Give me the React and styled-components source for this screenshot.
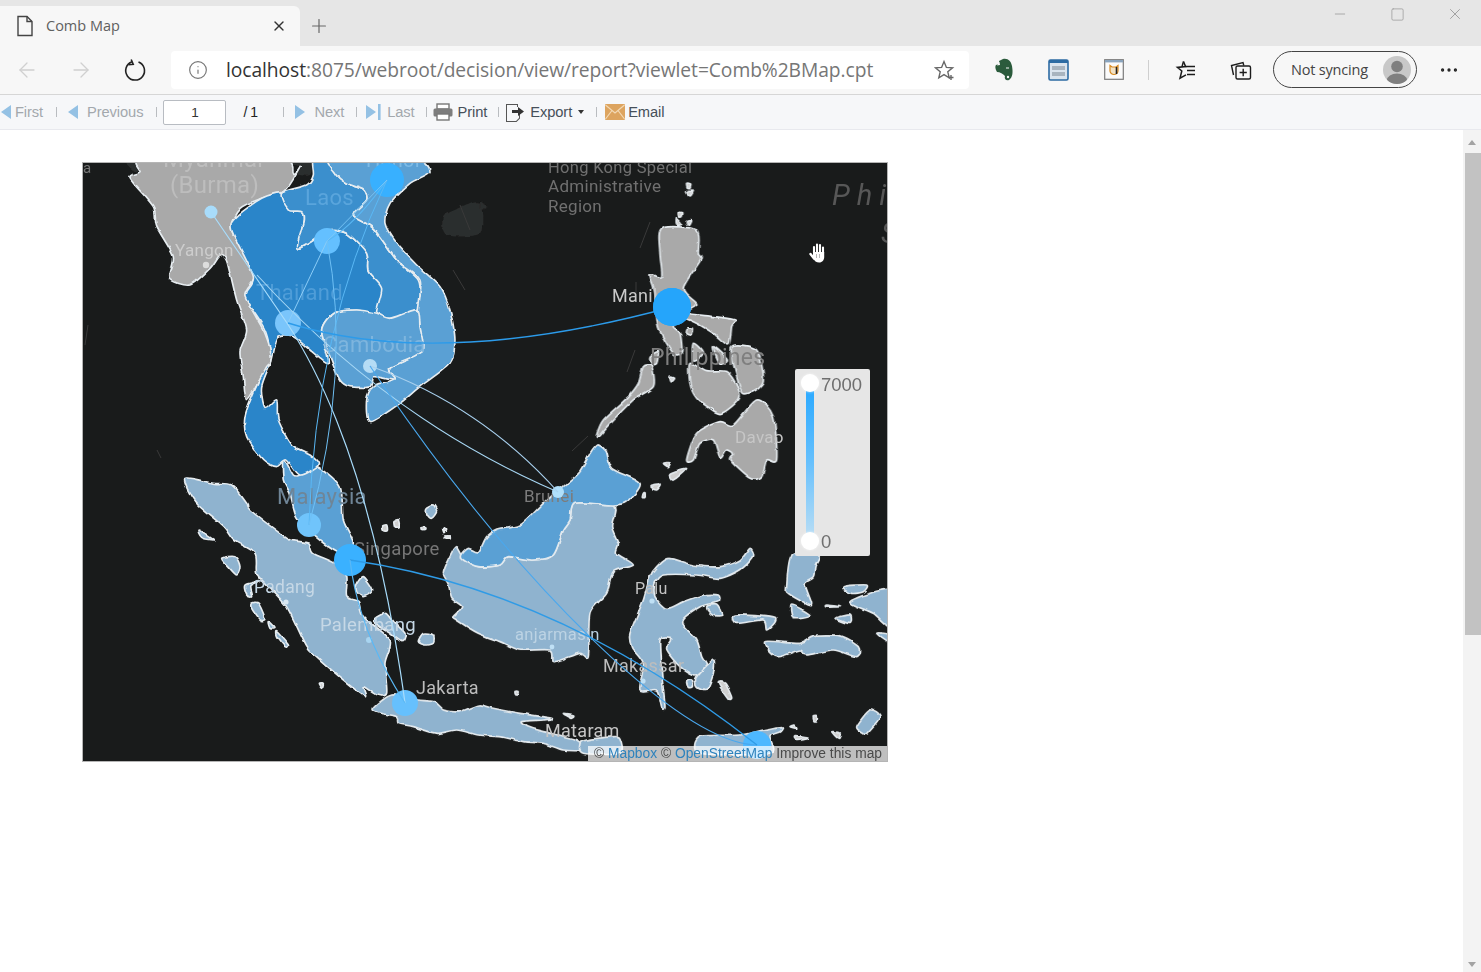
import React from "react";
import styled, { createGlobalStyle } from "styled-components";
import { ArrowLeft, ArrowRight, Info, MoreHorizontal, Minus, Plus, Square, X } from "lucide-react";

const GlobalStyle = createGlobalStyle`
  html, body { margin: 0; padding: 0; height: 100%; overflow: hidden; background: #fff; }
  body { font-family: "Liberation Sans", Arial, sans-serif; }
`;

const GRAY = "#a9a9a9";
const DEEP = "#2a85c9";
const MID = "#3b8fcd";
const SOFT = "#5aa0d4";
const PALE = "#8fb3cf";
const SPECK = "#cfcfcf";

// land shapes, written in the coordinates of four map quadrants (drawn at 3x)
const QUADRANTS = [
  {
    x: 80,
    y: 160,
    land: [
      [GRAY, "150,55 180,35 195,-5 600,-5 640,40 660,20 610,95 545,115 480,145 455,210 525,340 495,405 555,520 575,600 540,660 500,720 490,650 480,575 500,510 470,420 440,300 420,285 390,325 330,375 270,355 280,290 230,200 220,140"],
      [SOFT, "610,895 640,945 660,945 710,920 780,980 790,1080 820,1150 780,1180 700,1125 650,1070 630,1000 610,960"],
      [DEEP, "470,170 545,115 605,100 625,150 665,155 670,185 655,265 700,240 745,215 800,220 860,280 865,335 910,385 900,460 830,450 760,460 725,510 745,610 690,570 640,530 595,530 575,600 545,680 555,745 590,720 595,780 640,860 690,885 715,915 660,945 620,900 590,920 550,900 500,830 495,770 520,700 560,620 575,600 555,510 495,410 520,350 455,210"],
      [MID, "700,-5 755,-5 765,40 800,70 850,90 860,120 820,165 880,205 950,300 1015,360 1020,430 1010,450 930,475 890,460 905,385 865,335 860,280 800,220 745,215 655,265 670,185 665,155 625,150 605,100 680,75 700,45"],
      [SOFT, "755,-5 1000,-5 1050,35 990,70 930,130 915,190 950,250 1010,315 1080,380 1110,450 1125,540 1110,610 1020,680 960,730 870,785 860,720 880,680 945,660 930,625 1020,575 1020,500 1015,450 1020,360 950,300 880,205 820,165 860,120 850,90 800,70 765,40"],
      [SOFT, "760,460 830,450 890,460 930,475 1010,450 1020,500 1025,575 930,625 945,660 880,650 870,680 810,680 780,660 750,590 725,510"],
    ],
    dark: ["1090,170 1150,140 1200,130 1200,220 1100,225", "600,-5 690,-5 690,45 640,40 660,20", "140,10 190,5 170,35"],
  },
  {
    x: 480,
    y: 160,
    land: [
      [GRAY, "545,205 650,210 655,280 662,300 610,385 650,430 635,445 620,460 700,470 765,480 755,500 745,555 700,520 640,485 600,475 580,500 600,520 605,575 580,580 535,500 525,400 510,345 545,350 540,280"],
      [GRAY, "755,560 830,570 850,660 825,690 790,700 770,650"],
      [GRAY, "630,610 680,635 745,640 780,710 725,760 690,745 650,715 630,670"],
      [GRAY, "620,900 650,820 720,785 760,795 830,720 880,770 890,900 860,900 845,950 810,955 750,900 760,880 740,870 720,895 700,840 660,850 640,900"],
      [GRAY, "350,825 370,780 440,715 475,670 490,620 515,620 520,680 460,720 390,790 355,830"],
      [GRAY, "622,505 640,505 635,525 620,520"],
      [GRAY, "510,590 535,575 530,610 515,612"],
      [GRAY, "640,550 670,580 640,600"],
      [GRAY, "700,560 745,600 720,610"],
      [SPECK, "620,70 632,72 630,85 622,85"],
      [SPECK, "620,95 637,90 628,105"],
      [SPECK, "595,158 608,158 606,170 597,170"],
      [SPECK, "590,175 605,190 590,192"],
      [SPECK, "622,185 635,182 628,196"],
      [SPECK, "570,652 584,655 574,666"],
    ],
    dark: ["0,125 18,140 0,155"],
  },
  {
    x: 80,
    y: 460,
    land: [
      [PALE, "315,55 400,70 455,75 500,130 510,150 600,220 630,240 685,250 700,280 765,310 800,350 800,410 835,425 850,470 930,540 915,610 920,700 890,705 850,680 855,710 790,660 710,590 680,560 620,440 560,375 530,340 525,280 460,240 430,200 345,125"],
      [PALE, "355,210 395,235 400,240 365,232"],
      [PALE, "425,295 465,290 480,320 470,345 445,320"],
      [PALE, "515,430 535,430 555,475 540,480 515,445"],
      [PALE, "565,485 585,505 570,505"],
      [PALE, "590,515 625,555 615,560 590,530"],
      [PALE, "495,375 540,365 510,380 515,410 500,405"],
      [PALE, "885,475 920,460 945,490 975,520 965,545 930,520 890,495"],
      [PALE, "1015,545 1030,520 1060,525 1060,550 1035,555"],
      [PALE, "830,375 850,350 878,390 850,410 830,395"],
      [PALE, "1040,145 1060,135 1070,155 1055,175 1042,165"],
      [SPECK, "715,670 730,670 725,685"],
      [SPECK, "905,198 920,195 922,212 910,212"],
      [SPECK, "942,182 955,180 958,200 945,200"],
      [SPECK, "1027,200 1037,200 1037,208 1027,208"],
      [SPECK, "1088,205 1097,210 1092,218"],
      [SPECK, "1097,228 1110,228 1110,234 1097,234"],
    ],
    dark: [],
  },
  {
    x: 480,
    y: 460,
    land: [
      [PALE, "-110,340 -90,290 -70,260 -50,290 -5,320 60,315 85,290 160,300 220,285 250,210 270,180 285,130 400,135 395,200 415,250 410,280 460,315 400,335 380,400 330,460 325,590 300,580 220,605 210,570 120,570 60,545 -5,520 -70,480 -80,470 -55,440 -85,415 -95,370"],
      [SOFT, "-55,285 -35,265 -5,275 20,230 50,210 120,195 180,140 215,105 250,80 300,35 330,-20 350,-45 375,-30 395,25 480,70 440,125 400,135 285,130 270,180 250,210 220,285 160,300 85,290 60,315 -5,320 -50,300"],
      [PALE, "450,520 490,420 510,350 530,320 565,295 640,315 720,320 780,300 810,265 820,290 780,330 720,355 650,345 550,345 525,370 525,410 560,445 610,425 670,405 715,405 715,425 660,440 605,485 650,540 665,590 680,620 645,645 600,620 560,570 575,535 540,540 545,640 555,740 545,740 530,690 480,690 490,610 455,560"],
      [PALE, "650,650 700,600 700,640 680,690 650,680"],
      [PALE, "620,665 635,660 640,680 625,682"],
      [SPECK, "715,670 735,670 755,712 745,715"],
      [PALE, "680,440 710,435 725,465 700,465"],
      [PALE, "935,285 1015,285 1005,320 1000,350 975,370 995,430 985,435 925,400 920,380"],
      [PALE, "935,435 990,465 940,472"],
      [PALE, "1090,380 1160,375 1150,395 1115,400"],
      [SPECK, "1040,435 1085,440 1040,441"],
      [PALE, "1110,425 1232,390 1232,500 1180,460"],
      [PALE, "765,465 885,475 860,510 850,480 770,490"],
      [PALE, "1065,475 1110,465 1110,490"],
      [PALE, "1190,520 1232,525 1232,550"],
      [PALE, "855,545 960,550 1000,530 1080,530 1135,560 1130,590 1060,570 980,585 960,570 890,590"],
      [PALE, "1130,800 1170,750 1200,770 1160,820 1150,820"],
      [PALE, "-320,745 -265,705 -190,720 -140,725 -110,750 -60,755 -5,735 40,745 120,760 215,775 190,780 125,785 140,800 190,815 290,840 310,870 250,870 190,850 130,845 60,830 -5,825 -70,810 -130,820 -200,800 -245,790 -250,770 -300,760"],
      [PALE, "300,850 320,840 400,830 420,835 420,880 310,880"],
      [PALE, "660,830 780,825 850,810 905,800 900,815 870,830 870,880 660,880"],
      [SPECK, "250,760 278,765 270,772"],
      [SPECK, "102,694 114,694 112,704 104,704"],
      [SPECK, "1000,770 1012,770 1010,782 1002,782"],
      [SPECK, "1055,815 1080,820 1075,835"],
      [SPECK, "945,830 985,835 950,841"],
      [SPECK, "930,800 945,795 950,805"],
      [SPECK, "490,100 495,98 495,112 487,112"],
      [SPECK, "510,80 540,75 530,90"],
      [SPECK, "570,40 620,25 580,60"],
      [SPECK, "550,10 570,8 565,20"],
    ],
    dark: [],
  },
];

const ROUTES = [
  ["M211 212 L287 323 Q370 450 405 703", "#a8dcfb", 1.2],
  ["M257 275 Q390 420 558 492", "#a8d8f5", 1.1],
  ["M370 366 Q480 405 558 492", "#a8d0ee", 1.1],
  ["M370 366 Q480 530 590 637 T757 745", "#4aa8ee", 1.1],
  ["M350 560 Q560 590 757 745", "#2f9be6", 1.3],
  ["M350 560 Q358 630 405 703", "#5ab8f5", 1.2],
  ["M387 180 Q315 330 309 525", "#5ab8f5", 1],
  ["M387 180 Q355 225 327 241", "#5ab8f5", 1.2],
  ["M387 180 L327 241", "#7cc7f7", 0.9],
  ["M327 241 L288 323", "#8ccdf7", 1],
  ["M327 241 Q352 370 309 525", "#6fc0f5", 1],
  ["M288 323 Q440 370 672 307", "#2c9bea", 1.4],
];

const BUBBLES = [
  [211, 212, 6.5, "#a8dcfb"],
  [370, 366, 7, "#b5dcf5"],
  [558, 492, 6, "#b0e0fb"],
  [369, 640, 3, "#a8d4f0"],
  [288, 323, 13, "#7ac5fb"],
  [327, 241, 13, "#64c0ff"],
  [387, 180, 17, "#38b0ff"],
  [309, 525, 12, "#70c4fb"],
  [350, 560, 16, "#3ab1ff"],
  [405, 703, 13, "#66c0fd"],
  [757, 745, 14, "#4db8ff"],
  [672, 307, 19, "#25a5fb"],
];

const CITY_DOTS = [
  [206, 265, 3.2, "#dddddd"],
  [652, 601, 2.6, "#bfe0f5"],
  [552, 647, 2.4, "#bfe0f5"],
  [643, 681, 2.6, "#bfe0f5"],
  [286, 602, 2.6, "#d8e6f0"],
];

const LABELS = [
  ["Myanmar", 163, 167, 24, "#bdbdbd"],
  ["(Burma)", 170, 193, 24, "#bdbdbd"],
  ["Hanoi", 366, 167, 20, "#7dbbe6"],
  ["Laos", 305, 205, 22, "#5aa5dc"],
  ["Thailand", 256, 300, 22, "#4f9dd8"],
  ["Cambodia", 323, 352, 22, "#7eb5de"],
  ["Yangon", 175, 256, 17, "#cdcdcd"],
  ["Hong Kong Special", 548, 173, 16.5, "#707070"],
  ["Administrative", 548, 192, 17, "#707070"],
  ["Region", 548, 212, 17, "#707070"],
  ["Manila", 612, 302, 18, "#c9c9c9"],
  ["Philippines", 650, 365, 23, "#7f7f7f"],
  ["Davao", 735, 443, 17, "#c6c6c6"],
  ["Brunei", 524, 502, 17, "#7c7c7c"],
  ["Malaysia", 277, 504, 22, "#6f8597"],
  ["Singapore", 354, 555, 18.5, "#767676"],
  ["Padang", 254, 593, 17.5, "#c6d8e6"],
  ["Palembang", 320, 631, 18.5, "#c6d8e6"],
  ["Jakarta", 416, 694, 18, "#bdbdbd"],
  ["Palu", 635, 594, 16, "#c2c2c2"],
  ["anjarmasin", 515, 640, 16.5, "#bcd3e4"],
  ["Makassar", 603, 672, 18, "#bdbdbd"],
  ["Mataram", 545, 737, 18, "#c6c6c6"],
  ["a", 83, 173, 15, "#777777"],
];

// closed curve through the listed points, so coasts don't look like cut paper
const coast = (points) => {
  const p = points.split(" ").map((pair) => pair.split(",").map(Number));
  const at = (i) => p[(i + p.length) % p.length];
  const k = 0.13;
  let d = `M${p[0][0]} ${p[0][1]}`;
  p.forEach((cur, i) => {
    const prev = at(i - 1);
    const next = at(i + 1);
    const after = at(i + 2);
    d += `C${cur[0] + (next[0] - prev[0]) * k} ${cur[1] + (next[1] - prev[1]) * k} ${next[0] - (after[0] - cur[0]) * k} ${next[1] - (after[1] - cur[1]) * k} ${next[0]} ${next[1]}`;
  });
  return `${d}Z`;
};

const BrowserIcon = styled.svg`
  display: block;
  fill: none;
  stroke: ${(p) => p.$stroke || "#333"};
  stroke-width: ${(p) => p.$weight || 1.4};
`;

const Page = styled.div`
  width: 1481px;
  height: 972px;
  display: flex;
  flex-direction: column;
  overflow: hidden;
  color: #333;
`;

const TabStrip = styled.div`
  height: 46px;
  flex: none;
  box-sizing: border-box;
  padding-top: 6px;
  background: #e6e6e6;
  display: flex;
  align-items: stretch;
`;

const Tab = styled.div`
  width: 300px;
  box-sizing: border-box;
  padding: 0 13px 0 15px;
  background: #f7f7f7;
  border-radius: 0 6px 0 0;
  display: flex;
  align-items: center;
  gap: 11px;
`;

const TabTitle = styled.span`
  flex: 1;
  margin-top: -2px;
  font: 14.5px "Open Sans", sans-serif;
  color: #606060;
`;

const NewTab = styled.div`
  width: 38px;
  display: flex;
  align-items: center;
  justify-content: center;
  color: #666;
`;

const WindowControls = styled.div`
  margin: -6px -3px 0 auto;
  height: 28px;
  display: flex;
  align-items: center;
  color: #9a9a9a;
`;

const WindowButton = styled.div`
  width: 57.5px;
  display: flex;
  justify-content: center;
`;

const NavBar = styled.div`
  height: 49px;
  flex: none;
  box-sizing: border-box;
  background: #f7f7f7;
  border-bottom: 1px solid #d6d6d6;
  display: flex;
  align-items: center;
  padding-bottom: 1px;
`;

const ToolButton = styled.div`
  width: ${(p) => p.$width || 55}px;
  height: 36px;
  flex: none;
  display: flex;
  align-items: center;
  justify-content: center;
  color: ${(p) => p.$color || "#222"};
`;

const AddressBox = styled.div`
  width: 798px;
  height: 38px;
  margin: 0 7px 0 9px;
  flex: none;
  box-sizing: border-box;
  padding: 0 13px 0 17px;
  background: #fff;
  border-radius: 4px;
  display: flex;
  align-items: center;
  color: #777;
`;

const Url = styled.div`
  flex: 1;
  margin-left: 18px;
  font: 19.25px "Open Sans", sans-serif;
  letter-spacing: -0.07px;
  color: #767676;
  white-space: nowrap;
`;

const UrlHost = styled.span`
  color: #333;
`;

const NavDivider = styled.div`
  width: 1px;
  height: 20px;
  margin: 0 9px 0 7px;
  background: #cfcfcf;
`;

const SyncPill = styled.div`
  width: 144px;
  height: 37px;
  margin: 0 4px 0 5px;
  box-sizing: border-box;
  padding: 0 5px 0 17px;
  border: 1.5px solid #444;
  border-radius: 19px;
  display: flex;
  align-items: center;
  justify-content: space-between;
  font: 14.5px "Open Sans", sans-serif;
  letter-spacing: -0.2px;
  color: #444;
`;

const Avatar = styled.div`
  width: 28px;
  height: 28px;
  border-radius: 50%;
  background: #c8c8c8;
  overflow: hidden;
`;

const ReportBar = styled.div`
  height: 35px;
  flex: none;
  box-sizing: border-box;
  padding-left: 1px;
  background: #f6f7f9;
  border-bottom: 1px solid #e8e9ee;
  display: flex;
  align-items: center;
`;

const ReportItem = styled.div`
  display: flex;
  align-items: center;
  gap: ${(p) => p.$gap || 4}px;
  font-size: 14.7px;
  letter-spacing: -0.1px;
  color: ${(p) => (p.$off ? "#a3a8ad" : "#46505a")};
`;

const Separator = styled.div`
  width: 1px;
  height: 10px;
  margin: 0 ${(p) => p.$right || 11}px 0 ${(p) => p.$left || 11}px;
  background: #b9bcc0;
`;

const PageInput = styled.div`
  width: 63px;
  height: 25px;
  box-sizing: border-box;
  border: 1px solid #b8bcc2;
  border-radius: 2px;
  background: #fff;
  display: flex;
  align-items: center;
  justify-content: center;
  font-size: 13.5px;
  color: #333;
`;

const PageTotal = styled.span`
  width: 29px;
  margin-left: 17px;
  font-size: 14px;
  letter-spacing: 3px;
  color: #222;
`;

const Caret = styled.span`
  width: 0;
  height: 0;
  margin-left: 1px;
  border: 3.5px solid transparent;
  border-top: 4px solid #333;
  border-bottom: 0;
`;

const Body = styled.div`
  flex: 1;
  display: flex;
  min-height: 0;
`;

const Content = styled.main`
  flex: 1;
  padding: 32px 0 0 82px;
  background: #fff;
`;

const MapFrame = styled.div`
  position: relative;
  width: 806px;
  height: 600px;
  box-sizing: border-box;
  border: 1px solid #b5b5b5;
  background: #191b1b;
  overflow: hidden;
`;

const MapCanvas = styled.svg`
  position: absolute;
  left: -1px;
  top: -1px;
  display: block;
`;

const MapLabel = styled.text`
  font-family: Roboto, "Liberation Sans", sans-serif;
  letter-spacing: 0.3px;
`;

const SeaLabel = styled.text`
  font: italic 29px Roboto, "Liberation Sans", sans-serif;
  letter-spacing: 7px;
  fill: #575757;
`;

const Legend = styled.div`
  position: absolute;
  left: 712px;
  top: 206px;
  width: 75px;
  height: 187px;
  box-sizing: border-box;
  background: #e6e6e6;
  border-radius: 2px;
  font-size: 18.5px;
  color: #6f6f6f;
`;

const LegendTrack = styled.div`
  position: absolute;
  left: 11px;
  top: 20px;
  width: 8px;
  height: 145px;
  background: linear-gradient(#2aa9ff, #66c0fd 50%, #b5dcf5);
`;

const LegendHandle = styled.div`
  position: absolute;
  left: 6px;
  top: ${(p) => p.$top}px;
  width: 18px;
  height: 18px;
  border-radius: 50%;
  background: #fff;
  box-shadow: 0 0 3px rgba(255, 255, 255, 0.7);
`;

const LegendValue = styled.span`
  position: absolute;
  left: 26px;
  top: ${(p) => p.$top}px;
  line-height: 20px;
`;

const Attribution = styled.div`
  position: absolute;
  right: -1px;
  bottom: 0;
  width: 300px;
  height: 15px;
  box-sizing: border-box;
  padding-left: 6px;
  background: rgba(255, 255, 255, 0.72);
  font-size: 13.8px;
  line-height: 15px;
  color: #4a4a4a;
  white-space: nowrap;
`;

const MapLink = styled.span`
  color: #2f83bd;
`;

const HandCursor = styled.svg`
  position: absolute;
  left: 726px;
  top: 79px;
  display: block;
`;

const ScrollBar = styled.div`
  width: 18px;
  flex: none;
  display: flex;
  flex-direction: column;
  align-items: flex-end;
  background: #f3f3f3;
`;

const ScrollArrow = styled.div`
  width: 0;
  height: 0;
  margin: ${(p) => (p.$down ? "auto 5px 5px" : "10px 5px 8px")};
  border: 4px solid transparent;
  ${(p) => (p.$down ? "border-top: 5px solid #a3a3a3; border-bottom: 0;" : "border-bottom: 5px solid #a3a3a3; border-top: 0;")}
`;

const ScrollThumb = styled.div`
  width: 16px;
  height: 482px;
  background: #c2c2c2;
`;

const ReloadIcon = () => (
  <BrowserIcon width="24" height="24" viewBox="0 0 24 24" $stroke="#222" $weight="1.6">
    <path d="M9 3.8a9.4 9.4 0 1 0 6.5.1" />
    <path d="M8.2 1.5 10.2 6.3 5.4 6.6" />
  </BrowserIcon>
);

const StarPlusIcon = () => (
  <BrowserIcon width="22" height="22" viewBox="0 0 22 22" $stroke="#666">
    <path d="M10 2.5 12.4 8.4 18.6 8.8 13.8 12.8 15.2 18.8 10 15.6 4.8 18.8 6.2 12.8 1.4 8.8 7.6 8.4Z" />
    <path d="M17 16v5M14.5 18.5h5" />
  </BrowserIcon>
);

const EvernoteIcon = () => (
  <svg width="20" height="24" viewBox="0 0 20 24">
    <path fill="#2b5b3c" d="M5 3 9 1c5-1 8 2 9 7 1 6 1 11-3 14-3 1-5-1-4-4-2-2-5-4-8-4-2-3-2-6-1-7l3-1Z" />
    <path fill="#f7f7f7" d="M5.5 3.5 6 7l-3 .6Z" />
    <path d="M12 10h3" stroke="#f7f7f7" strokeWidth="1" />
    <circle cx="14" cy="19" r="1.2" fill="#f7f7f7" />
  </svg>
);

const ReaderIcon = () => (
  <svg width="21" height="22" viewBox="0 0 21 22">
    <rect x="1" y="1" width="19" height="20" rx="1.5" fill="#dbe4ee" stroke="#2d6ba3" strokeWidth="1.6" />
    <rect x="1" y="1" width="19" height="3" fill="#2d6ba3" />
    <rect x="4" y="7" width="13" height="4" fill="#a9b4bf" />
    <rect x="4" y="13" width="13" height="4" fill="#a9b4bf" />
  </svg>
);

const CatIcon = () => (
  <svg width="20" height="21" viewBox="0 0 20 21">
    <rect x="0.7" y="0.7" width="18.6" height="19.6" fill="#fbfbfb" stroke="#7b7b7b" strokeWidth="1.2" />
    <rect x="1" y="1" width="18" height="2.4" fill="#8aa4bd" />
    <path d="M6 6.5 8 8h4l2-1.5V12c0 2-2 3.5-4 3.5S6 14 6 12Z" fill="#f2e2c4" stroke="#d98a1f" strokeWidth="1.2" />
    <path d="M12.5 8v7" stroke="#222" strokeWidth="1.6" />
  </svg>
);

const FavoritesIcon = () => (
  <BrowserIcon width="22" height="22" viewBox="0 0 22 22" $stroke="#1c1c1c" $weight="1.5">
    <path d="M8.5 2.5 10.6 7.6 2.4 8.4 6.8 12 5 19.2 11 15.8" />
    <path d="M8.5 2.5 7 7.6M10.6 7.6h9.4M12 11.5h8M12 15.5h8" />
  </BrowserIcon>
);

const CollectionsIcon = () => (
  <BrowserIcon width="22" height="22" viewBox="0 0 22 22" $stroke="#1c1c1c" $weight="1.4">
    <path d="M3.5 16 1.5 6.5 13 3.5l.8 3" />
    <rect x="6" y="7" width="14.5" height="13" rx="1.5" />
    <path d="M13.2 9.8v7.4M9.6 13.5h7.2" />
  </BrowserIcon>
);

const PersonIcon = () => (
  <svg width="28" height="28" viewBox="0 0 28 28">
    <circle cx="14" cy="10.5" r="5.8" fill="#7f7f7f" />
    <ellipse cx="14" cy="24" rx="10" ry="6.5" fill="#7f7f7f" />
  </svg>
);

const DocIcon = () => (
  <BrowserIcon width="20" height="22" viewBox="0 0 20 22" $stroke="#444">
    <path d="M3 1.5h9l5 5V20.5H3Z" />
    <path d="M12 1.5v5h5" />
  </BrowserIcon>
);

const NavArrow = ({ right, bar }) => (
  <svg width={bar ? 15 : 11} height="16" viewBox={`0 0 ${bar ? 15 : 11} 16`}>
    <path fill="#94c1e4" d={right ? "M0 1 10 8 0 15Z" : "M10 1 0 8 10 15Z"} />
    {bar && <rect x="12" y="0" width="2.6" height="16" fill="#94c1e4" />}
  </svg>
);

const PrintIcon = () => (
  <svg width="20" height="18" viewBox="0 0 20 18">
    <rect x="4" y="1" width="12" height="5" fill="#fff" stroke="#777" strokeWidth="1.4" />
    <rect x="0.5" y="5.5" width="19" height="8" rx="1.5" fill="#7d7d7d" />
    <rect x="4" y="11" width="12" height="6" fill="#fff" stroke="#777" strokeWidth="1.4" />
  </svg>
);

const ExportIcon = () => (
  <svg width="20" height="21" viewBox="0 0 20 21">
    <path d="M1 2h12v3h-1V3H2v16h9l3-3v-4h1v4.5L11.5 20H1Z" fill="#555" />
    <path d="M7 8h6V5l6 4.5-6 4.5v-3H7Z" fill="#333" />
  </svg>
);

const EmailIcon = () => (
  <svg width="20" height="16" viewBox="0 0 20 16">
    <rect width="20" height="16" rx="1" fill="#dda45f" />
    <path d="M0.5 1 10 9l9.5-8M0.5 15l6.5-8.5M19.5 15 13 6.5" fill="none" stroke="#f3d9b4" strokeWidth="1.2" />
  </svg>
);

const GrabHand = () => (
  <HandCursor width="18" height="22" viewBox="0 0 18 22">
    <g stroke="#fff" strokeLinecap="round" fill="none">
      <path d="M5 11V5M8 10V2.5M11 10V3M14 11V5.5" strokeWidth="2.1" />
      <path d="M1.5 12 5 16.5" strokeWidth="2.4" />
    </g>
    <path d="M4 10h11.2v5c0 3-2 5.5-5 5.5S5.5 19 4 16Z" fill="#fff" />
    <path d="M7.5 12v4M10.5 12v4" stroke="#9a9a9a" strokeWidth="0.7" />
  </HandCursor>
);

const SeaMap = () => (
  <MapCanvas width="806" height="600" viewBox="82 162 806 600">
    <defs>
      <filter id="rough-coast" filterUnits="userSpaceOnUse" x="82" y="162" width="806" height="600">
        <feTurbulence type="fractalNoise" baseFrequency="0.09" numOctaves="2" seed="4" />
        <feDisplacementMap in="SourceGraphic" scale="4" xChannelSelector="R" yChannelSelector="G" />
      </filter>
    </defs>
    <g filter="url(#rough-coast)">
      {QUADRANTS.map((quad) => (
        <g key={`${quad.x}-${quad.y}`} transform={`translate(${quad.x} ${quad.y}) scale(0.3333)`}>
          {quad.dark.map((points) => (
            <path key={points} d={coast(points)} fill="#2c2d2d" />
          ))}
          {quad.land.map(([fill, points]) => (
            <path key={points} d={coast(points)} fill={fill} stroke="#e6ecf0" strokeWidth="5" strokeLinejoin="round" />
          ))}
        </g>
      ))}
    </g>
    <path d="M650 222 640 248M636 282V295M635 350 627 372M588 436 572 451M470 230l-10-25M453 270l12 20M157 450l4 8M85 345l3-20" stroke="#3a3a3a" fill="none" />
    {LABELS.map(([text, x, y, size, fill]) => (
      <MapLabel key={text} x={x} y={y} fontSize={size} fill={fill}>
        {text}
      </MapLabel>
    ))}
    <SeaLabel x="832" y="205">Phil</SeaLabel>
    <SeaLabel x="881" y="243">S</SeaLabel>
    {CITY_DOTS.map(([x, y, r, fill]) => (
      <circle key={`${x}-${y}`} cx={x} cy={y} r={r} fill={fill} />
    ))}
    {BUBBLES.map(([x, y, r, fill]) => (
      <circle key={`${x}-${y}`} cx={x} cy={y} r={r} fill={fill} />
    ))}
    {ROUTES.map(([d, stroke, width]) => (
      <path key={d} d={d} fill="none" stroke={stroke} strokeWidth={width} />
    ))}
    <circle cx="672" cy="307" r="19" fill="#25a5fb" />
  </MapCanvas>
);

export default function App() {
  return (
    <Page>
      <GlobalStyle />
      <TabStrip>
        <Tab>
          <DocIcon />
          <TabTitle>Comb Map</TabTitle>
          <X size={16} color="#333" strokeWidth={2} />
        </Tab>
        <NewTab>
          <Plus size={22} strokeWidth={1.3} />
        </NewTab>
        <WindowControls>
          <WindowButton><Minus size={16} strokeWidth={1.2} /></WindowButton>
          <WindowButton><Square size={15} strokeWidth={1.2} /></WindowButton>
          <WindowButton><X size={18} strokeWidth={1.2} /></WindowButton>
        </WindowControls>
      </TabStrip>
      <NavBar>
        <ToolButton $width={53} $color="#d0d0d0"><ArrowLeft size={24} strokeWidth={1.3} /></ToolButton>
        <ToolButton $color="#d0d0d0"><ArrowRight size={24} strokeWidth={1.3} /></ToolButton>
        <ToolButton $width={54}><ReloadIcon /></ToolButton>
        <AddressBox>
          <Info size={20} strokeWidth={1.4} />
          <Url>
            <UrlHost>localhost</UrlHost>:8075/webroot/decision/view/report?viewlet=Comb%2BMap.cpt
          </Url>
          <StarPlusIcon />
        </AddressBox>
        <ToolButton><EvernoteIcon /></ToolButton>
        <ToolButton><ReaderIcon /></ToolButton>
        <ToolButton><CatIcon /></ToolButton>
        <NavDivider />
        <ToolButton><FavoritesIcon /></ToolButton>
        <ToolButton><CollectionsIcon /></ToolButton>
        <SyncPill>
          Not syncing
          <Avatar><PersonIcon /></Avatar>
        </SyncPill>
        <ToolButton><MoreHorizontal size={22} strokeWidth={1.6} /></ToolButton>
      </NavBar>
      <ReportBar>
        <ReportItem $off $gap={3}><NavArrow />First</ReportItem>
        <Separator $left={13} />
        <ReportItem $off $gap={8}><NavArrow />Previous</ReportItem>
        <Separator $left={13} $right={6} />
        <PageInput>1</PageInput>
        <PageTotal>/1</PageTotal>
        <Separator />
        <ReportItem $off $gap={8}><NavArrow right />Next</ReportItem>
        <Separator $left={12} $right={9} />
        <ReportItem $off $gap={6}><NavArrow right bar />Last</ReportItem>
        <Separator $right={6} />
        <ReportItem $gap={5}><PrintIcon />Print</ReportItem>
        <Separator $right={6} />
        <ReportItem $gap={5}><ExportIcon />Export<Caret /></ReportItem>
        <Separator $left={12} $right={8} />
        <ReportItem $gap={3}><EmailIcon />Email</ReportItem>
      </ReportBar>
      <Body>
        <Content>
          <MapFrame>
            <SeaMap />
            <Legend>
              <LegendTrack />
              <LegendHandle $top={5} />
              <LegendHandle $top={163} />
              <LegendValue $top={6}>7000</LegendValue>
              <LegendValue $top={163}>0</LegendValue>
            </Legend>
            <GrabHand />
            <Attribution>
              © <MapLink>Mapbox</MapLink> © <MapLink>OpenStreetMap</MapLink> Improve this map
            </Attribution>
          </MapFrame>
        </Content>
        <ScrollBar>
          <ScrollArrow />
          <ScrollThumb />
          <ScrollArrow $down />
        </ScrollBar>
      </Body>
    </Page>
  );
}
